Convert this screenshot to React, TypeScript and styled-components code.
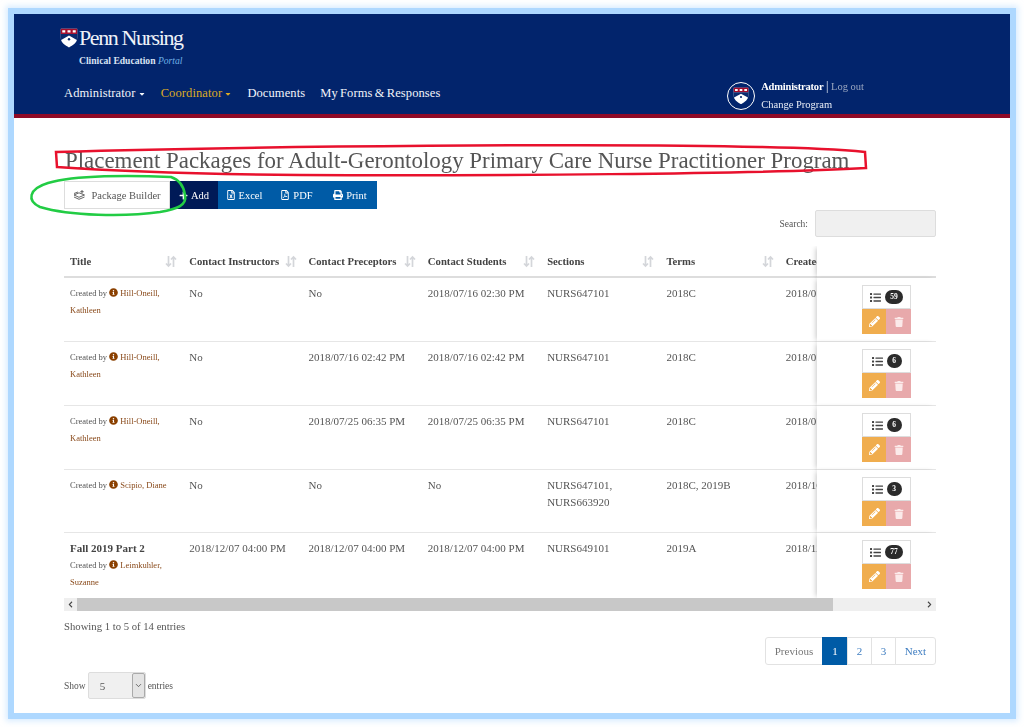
import styled, { createGlobalStyle } from "styled-components";
import {
  FaInfoCircle,
  FaList,
  FaPencilAlt,
  FaPlus,
  FaPrint,
  FaRegFileExcel,
  FaRegFilePdf,
  FaTrash,
  FaCaretDown,
  FaChevronLeft,
  FaChevronRight,
} from "react-icons/fa";
import { LuChevronDown } from "react-icons/lu";

type Row = {
  title?: string;
  author: string;
  instructors: string;
  preceptors: string;
  students: string;
  sections: string;
  terms: string;
  created: string;
  count: number;
};

const rows: Row[] = [
  { author: "Hill-Oneill, Kathleen", instructors: "No", preceptors: "No", students: "2018/07/16 02:30 PM", sections: "NURS647101", terms: "2018C", created: "2018/07/16 02:30 PM", count: 59 },
  { author: "Hill-Oneill, Kathleen", instructors: "No", preceptors: "2018/07/16 02:42 PM", students: "2018/07/16 02:42 PM", sections: "NURS647101", terms: "2018C", created: "2018/07/16 02:42 PM", count: 6 },
  { author: "Hill-Oneill, Kathleen", instructors: "No", preceptors: "2018/07/25 06:35 PM", students: "2018/07/25 06:35 PM", sections: "NURS647101", terms: "2018C", created: "2018/07/25 06:35 PM", count: 6 },
  { author: "Scipio, Diane", instructors: "No", preceptors: "No", students: "No", sections: "NURS647101, NURS663920", terms: "2018C, 2019B", created: "2018/10/02 11:15 AM", count: 3 },
  { title: "Fall 2019 Part 2", author: "Leimkuhler, Suzanne", instructors: "2018/12/07 04:00 PM", preceptors: "2018/12/07 04:00 PM", students: "2018/12/07 04:00 PM", sections: "NURS649101", terms: "2019A", created: "2018/12/07 04:00 PM", count: 77 },
];

const columns = ["Title", "Contact Instructors", "Contact Preceptors", "Contact Students", "Sections", "Terms", "Created"];

function Shield({ size }: { size: number }) {
  return (
    <svg width={size} height={size * 1.12} viewBox="0 0 24 27">
      <path d="M1 1h22v12c0 7-6 10-11 13C7 23 1 20 1 13z" fill="#fff" />
      <path d="M1 1h22v7H1z" fill="#a50d2c" />
      <path d="M3 3h4v3H3zM10 3h4v3h-4zM17 3h4v3h-4z" fill="#fff" />
      <path d="M1 8h22v5c0 1-.2 2-.5 3L12 10 1.500 16C1.200 15 1 14 1 13z" fill="#0a2a6e" />
      <path d="M12 12l7 7-7 5-7-5z" fill="#fff" />
      <circle cx="12" cy="15" r="1.600" fill="#0a2a6e" />
    </svg>
  );
}

function SortArrows() {
  return (
    <SortIcon width="12" height="13" viewBox="0 0 12 13">
      <path d="M3.500 1v10M1 8.500L3.500 11 6 8.500" />
      <path d="M8.500 12V2M6 4.500L8.500 2 11 4.500" />
    </SortIcon>
  );
}

function BuilderIcon() {
  return (
    <svg width="13" height="12" viewBox="0 0 13 12" fill="none" stroke="#555" strokeWidth="0.9">
      <path d="M1 6l5-2.200L11.500 6 6 8.300z" />
      <path d="M1 8l5 2.300L11.500 8" />
      <path d="M1 4.500L5 3M9 1v3.500M7.300 2.700h3.400" />
    </svg>
  );
}

export default function App() {
  return (
    <>
      <GlobalStyle />
      <Frame>
        <Header>
          <LogoBlock>
            <LogoRow>
              <Shield size={18} />
              <LogoName>Penn Nursing</LogoName>
            </LogoRow>
            <LogoSub>
              Clinical Education <em>Portal</em>
            </LogoSub>
          </LogoBlock>
          <NavBar>
            <NavList>
              <NavItem>
                Administrator <FaCaretDown size={8} />
              </NavItem>
              <NavItem $active>
                Coordinator <FaCaretDown size={8} />
              </NavItem>
              <NavItem>Documents</NavItem>
              <NavItem>My Forms &amp; Responses</NavItem>
            </NavList>
            <UserBox>
              <Seal>
                <Shield size={16} />
              </Seal>
              <UserText>
                <div>
                  <strong>Administrator</strong> <Pipe>|</Pipe> <LogOut>Log out</LogOut>
                </div>
                <div>Change Program</div>
              </UserText>
            </UserBox>
          </NavBar>
        </Header>
        <Main>
          <PageTitle>Placement Packages for Adult-Gerontology Primary Care Nurse Practitioner Program</PageTitle>
          <Toolbar>
            <BuilderButton>
              <BuilderIcon /> Package Builder
            </BuilderButton>
            <ToolButton $dark $width={48}>
              <FaPlus size={9} /> Add
            </ToolButton>
            <ToolButton $width={52}>
              <FaRegFileExcel size={10} /> Excel
            </ToolButton>
            <ToolButton $width={53}>
              <FaRegFilePdf size={10} /> PDF
            </ToolButton>
            <ToolButton $width={54}>
              <FaPrint size={10} /> Print
            </ToolButton>
          </Toolbar>
          <SearchRow>
            Search:
            <SearchInput />
          </SearchRow>
          <TableScroll>
            <Table>
              <thead>
                <tr>
                  {columns.map((c) => (
                    <HeadCell key={c}>
                      <HeadInner>
                        {c}
                        <SortArrows />
                      </HeadInner>
                    </HeadCell>
                  ))}
                  <ActionHead />
                </tr>
              </thead>
              <tbody>
                {rows.map((r, i) => (
                  <BodyRow key={i}>
                    <Cell>
                      {r.title && <RowTitle>{r.title}</RowTitle>}
                      <CreatedBy>
                        Created by <AuthorLink><FaInfoCircle size={9} /> {r.author}</AuthorLink>
                      </CreatedBy>
                    </Cell>
                    <Cell>{r.instructors}</Cell>
                    <Cell>{r.preceptors}</Cell>
                    <Cell>{r.students}</Cell>
                    <Cell>{r.sections}</Cell>
                    <Cell>{r.terms}</Cell>
                    <Cell>{r.created}</Cell>
                    <ActionCell>
                      <ActionBox>
                        <ListButton>
                          <FaList size={11} />
                          <CountBadge>{r.count}</CountBadge>
                        </ListButton>
                        <EditButton>
                          <FaPencilAlt size={11} />
                        </EditButton>
                        <DeleteButton>
                          <FaTrash size={10} />
                        </DeleteButton>
                      </ActionBox>
                    </ActionCell>
                  </BodyRow>
                ))}
              </tbody>
            </Table>
          </TableScroll>
          <ScrollBar>
            <ScrollArrow>
              <FaChevronLeft size={7} />
            </ScrollArrow>
            <ScrollThumb />
            <ScrollArrow>
              <FaChevronRight size={7} />
            </ScrollArrow>
          </ScrollBar>
          <InfoText>Showing 1 to 5 of 14 entries</InfoText>
          <Pagination>
            <PageLink $muted $width={58}>Previous</PageLink>
            <PageLink $current $width={26}>1</PageLink>
            <PageLink $width={25}>2</PageLink>
            <PageLink $width={25}>3</PageLink>
            <PageLink $width={41}>Next</PageLink>
          </Pagination>
          <LengthRow>
            Show
            <LengthSelect>
              5
              <SelectArrow>
                <LuChevronDown size={9} />
              </SelectArrow>
            </LengthSelect>
            entries
          </LengthRow>
        </Main>
      </Frame>
      <Annotations width="1024" height="727" viewBox="0 0 1024 727">
        <path
          d="M56 152C250 146 620 143 760 147C810 148 845 150 865 152L866 168C760 174 480 176 300 175C200 174 110 171 57 167Z"
          stroke="#e8112d"
          strokeWidth="2.500"
        />
        <path
          d="M171 177C130 175 75 175 48 183C28 189 27 201 40 207C70 216 125 217 160 212C178 209 187 205 185 195C184 188 180 180 171 177Z"
          stroke="#22cc44"
          strokeWidth="2.500"
        />
      </Annotations>
    </>
  );
}

const GlobalStyle = createGlobalStyle`
  html, body {
    margin: 0;
    background: #fff;
    font-family: "Liberation Serif", serif;
    color: #555;
  }
  #root {
    padding: 14px;
    height: 727px;
    width: 1024px;
    box-sizing: border-box;
    overflow: hidden;
    position: relative;
  }
`;

const Frame = styled.div`
  width: 996px;
  height: 699px;
  background: #fff;
  box-shadow: 0 0 0 6px #aed8ff, 0 0 6px 8px rgba(174, 216, 255, 0.5);
  filter: blur(0.45px);
`;

const Header = styled.header`
  height: 104px;
  box-sizing: border-box;
  background: #02246c;
  border-bottom: 4px solid #8f0a26;
  display: flex;
  flex-direction: column;
  justify-content: space-between;
  padding: 11px 0 0 46px;
  color: #fff;
`;

const LogoBlock = styled.div`
  display: flex;
  flex-direction: column;
`;

const LogoRow = styled.div`
  display: flex;
  align-items: center;
  gap: 1px;
`;

const LogoName = styled.span`
  font-size: 22px;
  letter-spacing: -1.4px;
  line-height: 26px;
  color: #eef2f8;
`;

const LogoSub = styled.div`
  margin: 4px 0 0 19px;
  font-size: 9.600px;
  font-weight: bold;
  color: #d8e2f2;
  em {
    font-weight: normal;
    color: #6fb1e6;
  }
`;

const NavBar = styled.div`
  display: flex;
  justify-content: space-between;
  align-items: flex-end;
  padding-right: 146px;
`;

const NavList = styled.nav`
  display: flex;
  gap: 15px;
  padding: 0 0 13px 4px;
`;

const NavItem = styled.a<{ $active?: boolean }>`
  font-size: 12.5px;
  letter-spacing: 0.1px;
  word-spacing: -1px;
  color: ${(p) => (p.$active ? "#dcaa24" : "#f2f5fa")};
  svg {
    vertical-align: -1px;
  }
`;

const UserBox = styled.div`
  display: flex;
  align-items: center;
  gap: 6px;
`;

const Seal = styled.div`
  width: 28px;
  height: 28px;
  box-sizing: border-box;
  border: 1px solid #fff;
  border-radius: 50%;
  display: flex;
  align-items: center;
  justify-content: center;
`;

const UserText = styled.div`
  font-size: 10.5px;
  line-height: 18px;
  color: #e8edf6;
  strong {
    color: #fff;
    letter-spacing: -0.2px;
  }
`;

const Pipe = styled.span`
  font-size: 12px;
`;

const LogOut = styled.span`
  color: #9aa6c0;
`;

const Main = styled.main`
  padding: 28px 74px 0 50px;
`;

const PageTitle = styled.h1`
  margin: 0 0 5px 1px;
  font-size: 22.900px;
  line-height: 30px;
  font-weight: normal;
  color: #555;
  white-space: nowrap;
`;

const Toolbar = styled.div`
  display: flex;
  height: 28px;
`;

const BuilderButton = styled.button`
  width: 106px;
  box-sizing: border-box;
  border: 1px solid #ddd;
  background: #fff;
  color: #555;
  font: 10.5px "Liberation Serif", serif;
  display: flex;
  align-items: center;
  justify-content: center;
  gap: 5px;
  padding: 0;
`;

const ToolButton = styled.button<{ $dark?: boolean; $width: number }>`
  width: ${(p) => p.$width}px;
  border: 0;
  padding: 0;
  background: ${(p) => (p.$dark ? "#001a57" : "#005ba6")};
  color: #fff;
  font: 10.5px "Liberation Serif", serif;
  display: flex;
  align-items: center;
  justify-content: center;
  gap: 3px;
`;

const SearchRow = styled.label`
  display: flex;
  justify-content: flex-end;
  align-items: center;
  gap: 7px;
  height: 27px;
  margin-top: 1px;
  font-size: 9.5px;
`;

const SearchInput = styled.div`
  width: 121px;
  height: 27px;
  box-sizing: border-box;
  background: #f0f0f0;
  border: 1px solid #ddd;
  border-radius: 2px;
`;

const TableScroll = styled.div`
  margin-top: 9px;
  width: 872px;
  overflow: hidden;
`;

const Table = styled.table`
  width: 954px;
  table-layout: fixed;
  border-collapse: separate;
  border-spacing: 0;
  font-size: 11px;
  line-height: 17px;
`;

const HeadCell = styled.th`
  height: 30px;
  padding: 0 6px;
  border-bottom: 2px solid #ddd;
  text-align: left;
  font-size: 10.7px;
  color: #444;
`;

const HeadInner = styled.div`
  display: flex;
  align-items: center;
  justify-content: space-between;
  white-space: nowrap;
`;

const SortIcon = styled.svg`
  flex: none;
  fill: none;
  stroke: #d4d6da;
  stroke-width: 1.700;
`;

const ActionHead = styled.th`
  width: 119px;
  padding: 0;
  position: sticky;
  right: 0;
  background: #fff;
  border-bottom: 2px solid #ddd;
  box-shadow: -3px 0 5px -2px rgba(0, 0, 0, 0.22);
`;

const BodyRow = styled.tr`
  height: 64px;
  &:nth-child(4) {
    height: 63px;
  }
  &:last-child {
    height: 65px;
  }
  &:last-child td {
    border-bottom: 0;
  }
`;

const Cell = styled.td`
  padding: 7px 6px 0;
  vertical-align: top;
  border-bottom: 1px solid #e6e6e6;
  overflow: hidden;
`;

const ActionCell = styled.td`
  position: sticky;
  right: 0;
  background: #fff;
  padding: 7px 0 0 45px;
  vertical-align: top;
  border-bottom: 1px solid #e6e6e6;
  box-shadow: -3px 0 5px -2px rgba(0, 0, 0, 0.22);
`;

const RowTitle = styled.div`
  font-weight: bold;
  color: #444;
`;

const CreatedBy = styled.div`
  font-size: 8.5px;
  color: #555;
`;

const AuthorLink = styled.span`
  color: #8a4b1c;
  svg {
    color: #8a4000;
    vertical-align: -1px;
  }
`;

const ActionBox = styled.div`
  width: 49px;
  display: grid;
  grid-template-columns: 24px 25px;
  grid-template-rows: 24px 25px;
`;

const ListButton = styled.div`
  grid-column: 1 / 3;
  box-sizing: border-box;
  border: 1px solid #ddd;
  display: flex;
  align-items: center;
  justify-content: center;
  gap: 4px;
  color: #444;
`;

const CountBadge = styled.span`
  min-width: 15px;
  height: 14px;
  padding: 0 5px;
  box-sizing: border-box;
  border-radius: 8px;
  background: #2b2b2b;
  color: #fff;
  font-size: 7.5px;
  font-weight: bold;
  line-height: 14px;
  text-align: center;
`;

const EditButton = styled.div`
  background: #f0ad4e;
  color: #fff;
  display: flex;
  align-items: center;
  justify-content: center;
`;

const DeleteButton = styled(EditButton)`
  background: #e8a9ab;
  color: #fbeaea;
`;

const ScrollBar = styled.div`
  display: flex;
  height: 13px;
  background: #efefef;
`;

const ScrollArrow = styled.div`
  width: 13px;
  flex: none;
  display: flex;
  align-items: center;
  justify-content: center;
  color: #444;
  &:last-child {
    margin-left: auto;
  }
`;

const ScrollThumb = styled.div`
  width: 756px;
  background: #c8c8c8;
`;

const InfoText = styled.div`
  margin-top: 7px;
  font-size: 10.7px;
  line-height: 16px;
`;

const Pagination = styled.div`
  display: flex;
  justify-content: flex-end;
  margin-top: 3px;
`;

const PageLink = styled.a<{ $width: number; $current?: boolean; $muted?: boolean }>`
  width: ${(p) => p.$width}px;
  height: 28px;
  box-sizing: border-box;
  display: flex;
  align-items: center;
  justify-content: center;
  font-size: 11px;
  border: 1px solid ${(p) => (p.$current ? "#005ba6" : "#e2e2e2")};
  margin-left: -1px;
  background: ${(p) => (p.$current ? "#005ba6" : "#fff")};
  color: ${(p) => (p.$current ? "#fff" : p.$muted ? "#777" : "#3d7cc0")};
  &:first-child {
    border-radius: 3px 0 0 3px;
  }
  &:last-child {
    border-radius: 0 3px 3px 0;
  }
`;

const LengthRow = styled.div`
  display: flex;
  align-items: center;
  gap: 2px;
  margin-top: 7px;
  font-size: 9.5px;
`;

const LengthSelect = styled.div`
  width: 58px;
  height: 27px;
  box-sizing: border-box;
  background: #f0f0f0;
  border: 1px solid #ddd;
  border-radius: 2px;
  display: flex;
  align-items: center;
  justify-content: space-between;
  padding-left: 11px;
  font-size: 11px;
`;

const SelectArrow = styled.span`
  width: 13px;
  height: 25px;
  box-sizing: border-box;
  border: 1px solid #aaa;
  border-radius: 2px;
  background: #e4e4e4;
  display: flex;
  align-items: center;
  justify-content: center;
  color: #444;
`;

const Annotations = styled.svg`
  position: absolute;
  left: 0;
  top: 0;
  fill: none;
  pointer-events: none;
`;
